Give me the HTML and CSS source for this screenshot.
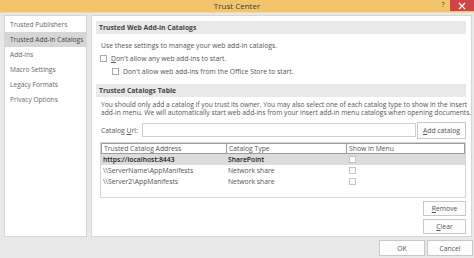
FILE: index.html
```html
<!DOCTYPE html>
<html>
<head>
<meta charset="utf-8">
<link rel="stylesheet" href="styles.css">
</head>
<body>
<div class="window">
  <div class="titlebar">
    <div class="title-spacer"></div>
    <div class="title">Trust Center</div>
    <div class="title-controls">
      <span class="help">?</span>
      <span class="close"><svg width="8" height="8" viewBox="0 0 8 8"><path d="M1 1L7 7M7 1L1 7" stroke="#fff" stroke-width="1.2"/></svg></span>
    </div>
  </div>
  <div class="content">
    <div class="nav">
      <div class="nav-item">Trusted Publishers</div>
      <div class="nav-item selected">Trusted Add-in Catalogs</div>
      <div class="nav-item">Add-ins</div>
      <div class="nav-item">Macro Settings</div>
      <div class="nav-item">Legacy Formats</div>
      <div class="nav-item">Privacy Options</div>
    </div>
    <div class="main">
      <div class="section-head">Trusted Web Add-in Catalogs</div>
      <div class="para intro">Use these settings to manage your web add-in catalogs.</div>
      <div class="check-row lvl1"><span class="box"></span><span><u>D</u>on't allow any web add-ins to start.</span></div>
      <div class="check-row lvl2"><span class="box"></span><span>Don't allow web add-ins from the Office Store to start.</span></div>
      <div class="section-head second">Trusted Catalogs Table</div>
      <div class="para desc">You should only add a catalog if you trust its owner. You may also select one of each catalog type to show in the insert<br>add-in menu. We will automatically start web add-ins from your insert add-in menu catalogs when opening documents.</div>
      <div class="url-row">
        <span class="url-label">Catalog <u>U</u>rl:</span>
        <span class="url-input"></span>
        <span class="btn add-btn"><u>A</u>dd catalog</span>
      </div>
      <div class="table">
        <div class="trow thead">
          <div class="c1">Trusted Catalog Address</div>
          <div class="c2">Catalog Type</div>
          <div class="c3">Show in Menu</div>
        </div>
        <div class="trow sel">
          <div class="c1">https://localhost:8443</div>
          <div class="c2">SharePoint</div>
          <div class="c3"><span class="box"></span></div>
        </div>
        <div class="trow">
          <div class="c1">\\ServerName\AppManifests</div>
          <div class="c2">Network share</div>
          <div class="c3"><span class="box"></span></div>
        </div>
        <div class="trow">
          <div class="c1">\\Server2\AppManifests</div>
          <div class="c2">Network share</div>
          <div class="c3"><span class="box"></span></div>
        </div>
      </div>
      <div class="side-btns">
        <span class="btn side-btn"><u>R</u>emove</span>
        <span class="btn side-btn"><u>C</u>lear</span>
      </div>
    </div>
  </div>
  <div class="footer">
    <span class="btn foot-btn">OK</span>
    <span class="btn foot-btn">Cancel</span>
  </div>
</div>
</body>
</html>
```
FILE: styles.css
```css
* { box-sizing: border-box; }
html, body { margin: 0; padding: 0; }
body {
  width: 474px;
  height: 258px;
  overflow: hidden;
  background: #e8e8e8;
  font-family: "Open Sans", "Noto Sans", sans-serif;
  font-size: 6.8px;
  color: #555;
}
u { text-decoration: underline; text-underline-offset: 1px; }
.window { display: flex; flex-direction: column; height: 258px; }
.titlebar {
  height: 13px;
  background: #f2c56d;
  border-bottom: 1px solid #f7d99a;
  display: grid;
  grid-template-columns: 1fr auto 1fr;
  align-items: stretch;
}
.title { font-size: 8px; color: #3a3a3a; line-height: 12px; }
.title-controls { display: flex; justify-content: flex-end; align-items: stretch; }
.help { color: #444; font-size: 7px; line-height: 10px; width: 10px; text-align: center; margin-right: 2px; }
.close {
  width: 24px; height: 11px; background: #cf434b;
  display: flex; align-items: center; justify-content: center;
}
.content {
  display: flex;
  gap: 4px;
  padding: 2px 2px 0 4px;
  height: 224px;
}
.nav {
  width: 83px;
  flex-shrink: 0;
  background: #fff;
  border: 1px solid #d6d6d6;
  padding-top: 1px;
  font-size: 6.6px;
}
.nav-item {
  height: 15px;
  line-height: 15px;
  padding-left: 5px;
  color: #666;
  white-space: nowrap;
}
.nav-item.selected { background: #d6d6d6; color: #444; }
.main {
  flex: 1;
  min-width: 0;
  background: #fff;
  border: 1px solid #d6d6d6;
  padding: 5px 5px 0 4px;
  display: flex;
  flex-direction: column;
}
.section-head {
  height: 13px;
  line-height: 13px;
  background: #e9e9e9;
  font-weight: bold;
  color: #444;
  padding-left: 3px;
}
.para { padding-left: 5px; line-height: 8.5px; color: #555; }
.intro { margin-top: 8px; }
.check-row { display: flex; align-items: center; gap: 4px; height: 13px; color: #555; }
.lvl1 { padding-left: 4px; margin-top: 1px; }
.lvl2 { padding-left: 16px; }
.box {
  display: inline-block; width: 7px; height: 7px;
  border: 1px solid #a8a8a8; background: #fff;
}
.section-head.second { margin-top: 6px; }
.desc { margin-top: 4px; font-size: 6.7px; white-space: nowrap; }
.url-row { display: flex; align-items: center; margin-top: 4px; height: 17px; }
.url-label { padding-left: 5px; width: 46px; }
.url-input { flex: 1; height: 14px; border: 1px solid #cfcfcf; background: #fff; margin-right: 1px; }
.btn {
  display: flex; align-items: center; justify-content: center;
  background: #fdfdfd; border: 1px solid #c8c8c8; color: #555;
}
.add-btn { width: 49px; height: 17px; }
.table {
  margin: 3px 0 0 4px;
  height: 56px;
  border: 1px solid #d4d4d4;
}
.trow { display: grid; grid-template-columns: 125px 120px 1fr; height: 11px; line-height: 11px; }
.trow > div { padding-left: 2px; white-space: nowrap; overflow: hidden; display: flex; align-items: center; }
.thead { border: 1px solid #9c9c9c; height: 11px; }
.thead > div { border-right: 1px solid #9c9c9c; color: #555; }
.thead > div:last-child { border-right: none; }
.trow.sel { background: #dcdcdc; }
.trow.sel > div { color: #222; font-weight: 600; }
.trow .c3 .box { margin-left: 1px; border-color: #c4c4c4; }
.side-btns { display: flex; flex-direction: column; align-items: flex-end; gap: 3px; margin-top: 3px; }
.side-btn { width: 43px; height: 15px; }
.footer { display: flex; justify-content: flex-end; gap: 2px; padding: 3px 1px 0 0; }
.foot-btn { width: 46px; height: 16px; }
```
